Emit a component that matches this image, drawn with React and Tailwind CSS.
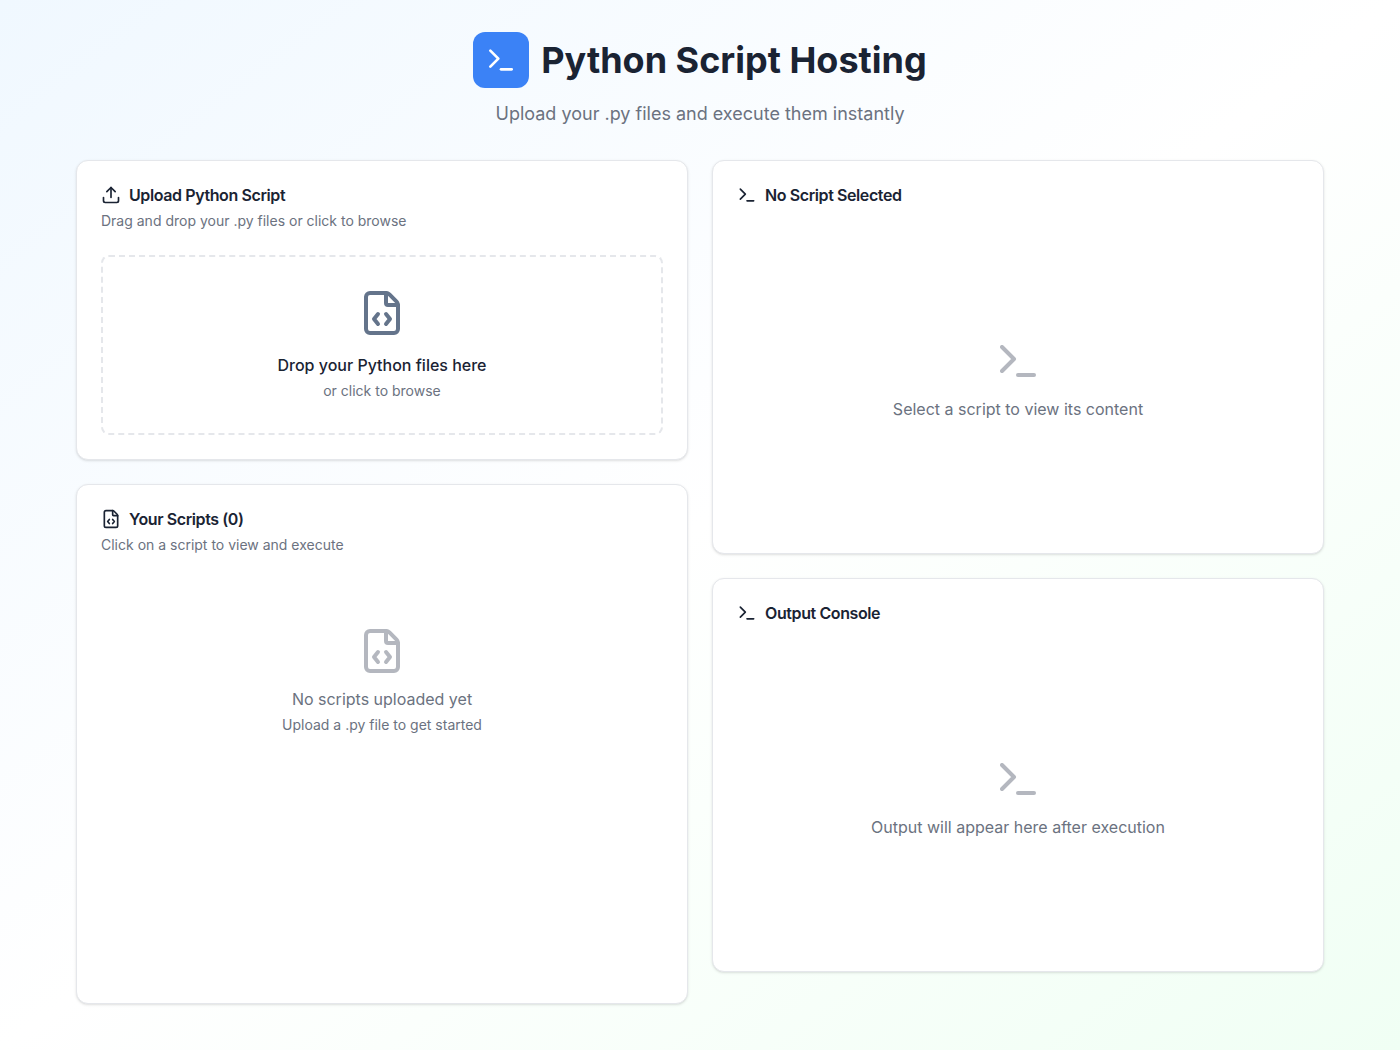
import { FileCode, Terminal, Upload } from "lucide-react";

function Card({ icon, title, description, children }) {
  return (
    <div className="rounded-xl border border-[#e5e7eb] bg-white shadow-sm">
      <div className="flex flex-col gap-1.5 p-6">
        <h3 className="flex items-center gap-2 text-base leading-none font-semibold tracking-tight text-[#1a2333]">
          {icon}
          {title}
        </h3>
        {description && <p className="text-sm text-[#6b7280]">{description}</p>}
      </div>
      <div className="px-6 pb-6">{children}</div>
    </div>
  );
}

function ConsoleEmpty({ text }) {
  return (
    <div className="flex h-[300px] flex-col items-center justify-center text-center">
      <Terminal className="mb-3 h-12 w-12 text-[#6b7280] opacity-50" />
      <p className="text-base text-[#6b7280]">{text}</p>
    </div>
  );
}

export default function App() {
  return (
    <div className="min-h-screen bg-gradient-to-br from-[#f0f8ff] via-white to-[#f0fff4] font-['Inter',sans-serif] antialiased">
      <div className="mx-auto max-w-7xl px-4 py-8">
        <div className="mb-8 text-center">
          <div className="mb-3 flex items-center justify-center gap-3">
            <div className="flex h-14 w-14 items-center justify-center rounded-xl bg-[#3b82f6]">
              <Terminal className="h-8 w-8 text-white" />
            </div>
            <h1 className="text-4xl font-bold text-[#1a2333]">Python Script Hosting</h1>
          </div>
          <p className="text-lg text-[#6b7280]">Upload your .py files and execute them instantly</p>
        </div>

        <div className="grid grid-cols-2 gap-6">
          <div className="flex flex-col gap-6">
            <Card
              icon={<Upload className="h-5 w-5" />}
              title="Upload Python Script"
              description="Drag and drop your .py files or click to browse"
            >
              <div className="rounded-lg border-2 border-dashed border-[#e5e7eb] p-8 text-center">
                <FileCode className="mx-auto mb-4 h-12 w-12 text-[#64748b]" />
                <p className="mb-1 font-medium text-[#1a2333]">Drop your Python files here</p>
                <p className="text-sm text-[#6b7280]">or click to browse</p>
              </div>
            </Card>

            <Card
              icon={<FileCode className="h-5 w-5" />}
              title="Your Scripts (0)"
              description="Click on a script to view and execute"
            >
              <div className="h-[400px] py-12 text-center">
                <FileCode className="mx-auto mb-3 h-12 w-12 text-[#6b7280] opacity-50" />
                <p className="mb-1 text-[#6b7280]">No scripts uploaded yet</p>
                <p className="text-sm text-[#6b7280]">Upload a .py file to get started</p>
              </div>
            </Card>
          </div>

          <div className="flex flex-col gap-6">
            <Card icon={<Terminal className="h-5 w-5" />} title="No Script Selected">
              <ConsoleEmpty text="Select a script to view its content" />
            </Card>
            <Card icon={<Terminal className="h-5 w-5" />} title="Output Console">
              <ConsoleEmpty text="Output will appear here after execution" />
            </Card>
          </div>
        </div>
      </div>
    </div>
  );
}
